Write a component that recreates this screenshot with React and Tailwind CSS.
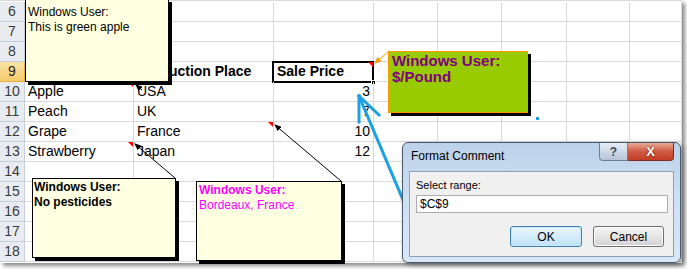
import React from "react"

const rows = [
	{ n: 6 },
	{ n: 7 },
	{ n: 8 },
	{ n: 9, b: "Production Place", c: "Sale Price", head: true },
	{ n: 10, a: "Apple", b: "USA", c: "3", markA: true },
	{ n: 11, a: "Peach", b: "UK", c: "7" },
	{ n: 12, a: "Grape", b: "France", c: "10", markB: true },
	{ n: 13, a: "Strawberry", b: "Japan", c: "12", markA: true },
	{ n: 14 },
	{ n: 15 },
	{ n: 16 },
	{ n: 17 },
	{ n: 18 },
]

// empty columns right of C
const restCols = ["w-[64px]", "w-[64px]", "w-[65px]", "w-[63px]", "flex-1"]

const Marker = () => (
	<span className="absolute right-0 top-0 h-0 w-0 border-l-[5px] border-t-[5px] border-l-transparent border-t-[#ff0000]" />
)

const Comment = ({ className, children }) => (
	<div className={`absolute border border-black bg-[#ffffe1] shadow-[3px_3px_0_#000] text-[12px] leading-[15px] ${className}`}>
		{children}
	</div>
)

const App = () => {
	return (
		<div className="relative h-[269px] w-[687px] overflow-hidden bg-white font-['Liberation_Sans',Arial,sans-serif] text-black">
			{/* sheet */}
			<div className="h-[263px] w-[682px] overflow-hidden border-t border-[#d9d9d9] bg-white pt-0 shadow-[3px_3px_4px_rgba(0,0,0,0.45)]">
				<div className="h-[1px]" />
				{rows.map((r) => (
					<div key={r.n} className="flex h-[20px]">
						<div
							className={`flex w-[25px] shrink-0 items-center justify-center border-b border-r text-[14px] ${
								r.head
									? "border-[#e3ad3f] bg-gradient-to-b from-[#fbe3a6] to-[#f6c96a] text-[#222]"
									: "border-[#c7ced8] bg-[#e8ebf0] text-[#3a3a3a]"
							}`}
						>
							{r.n}
						</div>
						<div className="relative flex w-[109px] shrink-0 items-center border-b border-r border-[#d9d9d9] pl-[3px] text-[14px]">
							{r.a}
							{r.markA && <Marker />}
						</div>
						<div className="relative flex w-[140px] shrink-0 items-center border-b border-r border-[#d9d9d9] pl-[3px] text-[14px]">
							<span className={r.head ? "font-bold" : ""}>{r.b}</span>
							{r.markB && <Marker />}
						</div>
						<div
							className={`relative flex w-[100px] shrink-0 items-center border-b border-r border-[#d9d9d9] text-[14px] ${
								r.head ? "pl-[3px] font-bold" : "justify-end pr-[3px]"
							}`}
						>
							{r.c}
							{r.head && (
								<>
									<span className="absolute -bottom-[2px] -left-[2px] -right-[1px] -top-[1px] border-2 border-black" />
									<span className="absolute -bottom-[4px] -right-[3px] h-[5px] w-[5px] border border-white bg-black" />
									<Marker />
								</>
							)}
						</div>
						{restCols.map((w, i) => (
							<div key={i} className={`shrink-0 border-b border-r border-[#d9d9d9] ${w}`} />
						))}
					</div>
				))}
			</div>

			{/* comments */}
			<Comment className="left-[25px] top-[-1px] h-[83px] w-[144px] pl-[2px] pt-[5px] leading-[14px]">
				<div>Windows User:</div>
				<div>This is green apple</div>
			</Comment>

			<Comment className="left-[32px] top-[178px] h-[80px] w-[144px] pl-[1px] pt-[1px] font-bold">
				<div>Windows User:</div>
				<div>No pesticides</div>
			</Comment>

			<Comment className="left-[196px] top-[181px] h-[80px] w-[146px] pl-[2px] pt-[1px] text-[#ff00ff]">
				<div className="font-bold">Windows User:</div>
				<div>Bordeaux, France</div>
			</Comment>

			<div className="absolute left-[388px] top-[51px] h-[62px] w-[140px] border border-[#ff9900] bg-[#99cc00] pl-[3px] pt-[1px] text-[15px] font-bold leading-[16px] text-[#800080] shadow-[3px_3px_0_#000]">
				<div>Windows User:</div>
				<div>$/Pound</div>
			</div>

			{/* connectors and the blue pointer */}
			<svg className="pointer-events-none absolute left-0 top-0" width="687" height="269">
				<defs>
					<marker id="blk" markerWidth="7" markerHeight="6" refX="6" refY="3" orient="auto" markerUnits="userSpaceOnUse">
						<path d="M0,0 L7,3 L0,6 z" fill="#000" />
					</marker>
					<marker id="org" markerWidth="7" markerHeight="6" refX="6" refY="3" orient="auto" markerUnits="userSpaceOnUse">
						<path d="M0,0 L7,3 L0,6 z" fill="#ff9900" />
					</marker>
				</defs>
				<line x1="175" y1="178" x2="135" y2="144" stroke="#000" strokeWidth="1" markerEnd="url(#blk)" />
				<line x1="341" y1="181" x2="275" y2="125" stroke="#000" strokeWidth="1" markerEnd="url(#blk)" />
				<line x1="142" y1="90" x2="136" y2="85" stroke="#000" strokeWidth="1" markerEnd="url(#blk)" />
				<line x1="388" y1="52" x2="375" y2="63" stroke="#ff9900" strokeWidth="1" markerEnd="url(#org)" />
				<g stroke="#1ba1e2" strokeWidth="3" strokeLinecap="square" fill="none">
					<line x1="359" y1="96" x2="420" y2="240" />
					<line x1="359" y1="96" x2="359" y2="122" />
					<line x1="359" y1="96" x2="379" y2="115" />
				</g>
				<rect x="536" y="117" width="3" height="3" fill="#1ba1e2" />
			</svg>

			{/* Format Comment dialog */}
			<div className="absolute left-[402px] top-[142px] h-[121px] w-[279px] rounded-[6px] border border-[#4a5a6d] bg-gradient-to-b from-[#bcd2ea] via-[#cfe0f2] to-[#d9e7f5] shadow-[2px_2px_5px_rgba(0,0,0,0.35)]">
				<div className="flex h-[28px]">
					<div className="pl-[8px] pt-[5px] text-[12px] leading-[16px] text-black">Format Comment</div>
					<div className="ml-auto mr-[6px] flex h-[18px]">
						<div className="flex w-[29px] items-center justify-center rounded-bl-[4px] border border-t-0 border-[#6f8196] bg-gradient-to-b from-[#e6eef7] via-[#cdd9e7] to-[#b4c4d8] text-[12px] font-bold leading-none text-[#3c4a5a]">
							?
						</div>
						<div className="flex w-[46px] items-center justify-center rounded-br-[4px] border border-l-0 border-t-0 border-[#7a2d20] bg-gradient-to-b from-[#e9a897] via-[#cf5a42] to-[#c23d24] text-[13px] font-bold leading-none text-white [text-shadow:0_0_2px_#3b0d05]">
							X
						</div>
					</div>
				</div>
				<div className="mx-[6px] h-[86px] border border-[#8da2b8] bg-[#f0f0f0]">
					<div className="ml-[6px] mt-[6px] text-[11px] leading-[14px] text-black">Select range:</div>
					<div className="ml-[6px] mt-[3px] flex h-[18px] w-[252px] items-center border border-[#abadb3] bg-white pl-[3px] text-[12px]">
						$C$9
					</div>
					<div className="mr-[9px] mt-[13px] flex justify-end gap-[11px]">
						<div className="flex h-[21px] w-[72px] items-center justify-center rounded-[3px] border border-[#3c7fb1] bg-gradient-to-b from-[#eaf6fd] to-[#bfe2f6] text-[12px] shadow-[inset_0_0_0_1px_#c6e9fb]">
							OK
						</div>
						<div className="flex h-[21px] w-[71px] items-center justify-center rounded-[3px] border border-[#707070] bg-gradient-to-b from-[#f3f3f3] via-[#e6e6e6] to-[#d2d2d2] text-[12px] shadow-[inset_0_0_0_1px_#fcfcfc]">
							Cancel
						</div>
					</div>
				</div>
			</div>
		</div>
	)
}

export default App
